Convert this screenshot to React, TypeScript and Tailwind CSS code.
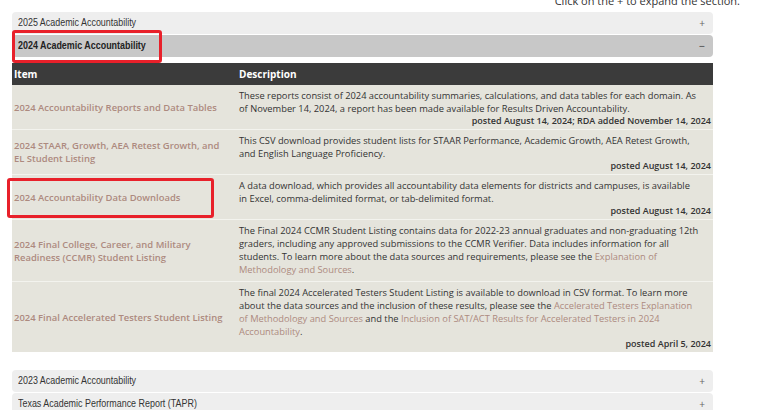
import React from "react";

type Row = {
  item: string;
  desc: React.ReactNode;
  posted?: string;
};

const Lnk = ({ children }: { children: React.ReactNode }) => (
  <a className="text-[#ad8a7f] no-underline">{children}</a>
);

const rows: Row[] = [
  {
    item: "2024 Accountability Reports and Data Tables",
    desc: (
      <>
        These reports consist of 2024 accountability summaries, calculations, and data tables for each domain. As
        <br />
        of November 14, 2024, a report has been made available for Results Driven Accountability.
      </>
    ),
    posted: "posted August 14, 2024; RDA added November 14, 2024",
  },
  {
    item: "2024 STAAR, Growth, AEA Retest Growth, and EL Student Listing",
    desc: (
      <>
        This CSV download provides student lists for STAAR Performance, Academic Growth, AEA Retest Growth,
        <br />
        and English Language Proficiency.
      </>
    ),
    posted: "posted August 14, 2024",
  },
  {
    item: "2024 Accountability Data Downloads",
    desc: (
      <>
        A data download, which provides all accountability data elements for districts and campuses, is available
        <br />
        in Excel, comma-delimited format, or tab-delimited format.
      </>
    ),
    posted: "posted August 14, 2024",
  },
  {
    item: "2024 Final College, Career, and Military Readiness (CCMR) Student Listing",
    desc: (
      <>
        The Final 2024 CCMR Student Listing contains data for 2022-23 annual graduates and non-graduating 12th
        <br />
        graders, including any approved submissions to the CCMR Verifier. Data includes information for all
        <br />
        students. To learn more about the data sources and requirements, please see the{" "}
        <Lnk>
          Explanation of
          <br />
          Methodology and Sources
        </Lnk>
        .
      </>
    ),
  },
  {
    item: "2024 Final Accelerated Testers Student Listing",
    desc: (
      <>
        The final 2024 Accelerated Testers Student Listing is available to download in CSV format. To learn more
        <br />
        about the data sources and the inclusion of these results, please see the{" "}
        <Lnk>
          Accelerated Testers Explanation
          <br />
          of Methodology and Sources
        </Lnk>{" "}
        and the{" "}
        <Lnk>
          Inclusion of SAT/ACT Results for Accelerated Testers in 2024
          <br />
          Accountability
        </Lnk>
        .
      </>
    ),
    posted: "posted April 5, 2024",
  },
];

const Panel = ({ title, open = false, boxed = false }: { title: string; open?: boolean; boxed?: boolean }) => (
  <div
    className={`relative flex items-center justify-between h-[22px] rounded-[4px] pl-[6px] pr-[8px] ${
      open ? "bg-[#c8c8c8] font-bold text-[#222]" : "bg-[#eeeeee] text-[#333]"
    }`}
    style={{ fontFamily: '"Liberation Sans", Arial, sans-serif' }}
  >
    <span className="inline-block origin-left scale-x-[0.85] whitespace-nowrap text-[10.5px]">{title}</span>
    <span className="text-[10px] text-[#666]" style={{ fontFamily: '"Open Sans", sans-serif' }}>
      {open ? "−" : "+"}
    </span>
    {boxed && (
      <div className="absolute left-0 top-[-5px] w-[150px] h-[33px] border-[3px] border-[#e8202a] rounded-[3px]" />
    )}
  </div>
);

export default function App() {
  return (
    <div className="w-[768px] h-[410px] overflow-hidden bg-white text-[#333]" style={{ fontFamily: '"Open Sans", sans-serif' }}>
      <div className="h-[12px] overflow-hidden">
        <p className="text-right pr-[28px] text-[11px] leading-[12px] -mt-[5px]">Click on the + to expand the section.</p>
      </div>
      <div className="ml-[12px] w-[701px]">
        <div className="flex flex-col gap-[1px]">
          <Panel title="2025 Academic Accountability" />
          <Panel title="2024 Academic Accountability" open boxed />
        </div>
        <table className="mt-[6px] w-full border-collapse text-[9.3px] leading-[13px]">
          <thead>
            <tr className="bg-[#3b3b3b] text-white h-[22px]">
              <th className="w-[224px] text-left font-bold pl-[2px] text-[10px]">Item</th>
              <th className="text-left font-bold pl-[3px] text-[10px]">Description</th>
            </tr>
          </thead>
          <tbody className="bg-[#e5e4dc]">
            {rows.map((r, i) => (
              <tr key={i} className="border-t border-[#f3f3ee] first:border-t-0">
                <td className="relative align-middle pl-[2px] pr-[6px] py-[4px] font-semibold text-[9.45px] text-[#ad8a7f]">
                  {r.item}
                  {i === 2 && (
                    <div className="absolute left-[-5px] top-[3px] w-[207px] h-[40px] border-[3px] border-[#e8202a] rounded-[3px]" />
                  )}
                </td>
                <td className={`align-top pl-[3px] pr-[2px] pt-[4px] ${i === 3 ? "pb-[5px]" : "pb-[3px]"}`}>
                  <p className="whitespace-nowrap">{r.desc}</p>
                  {r.posted && <p className="text-right font-semibold text-[9px] leading-[11px] text-[#333]">{r.posted}</p>}
                </td>
              </tr>
            ))}
          </tbody>
        </table>
        <div className="mt-[18px] flex flex-col gap-[1px]">
          <Panel title="2023 Academic Accountability" />
          <Panel title="Texas Academic Performance Report (TAPR)" />
        </div>
      </div>
    </div>
  );
}
